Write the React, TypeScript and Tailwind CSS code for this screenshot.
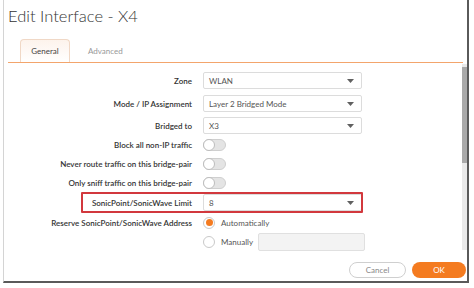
import React from 'react';

const font = { fontFamily: 'Lato, "Open Sans", "Liberation Sans", sans-serif' };

const Caret = () => (
  <svg width="7" height="4" viewBox="0 0 7 4" className="shrink-0">
    <path d="M0 0 L7 0 L3.5 4 Z" fill="#606060" />
  </svg>
);

const Select = ({ value }: { value: string }) => (
  <div className="w-[159px] h-[17px] border border-[#dcdcdc] rounded-[2px] bg-white flex items-center justify-between pl-[5px] pr-[7px] text-[8px] text-[#555]">
    <span>{value}</span>
    <Caret />
  </div>
);

const Toggle = () => (
  <div className="w-[23px] h-[12px] rounded-full bg-[#e4e4e4] border border-[#cfcfcf] relative">
    <span className="absolute left-[-1px] top-[-1px] w-[12px] h-[12px] rounded-full bg-white border border-[#bdbdbd]" />
  </div>
);

const Row = ({ label, h, children, className = '' }: { label: string; h: string; children?: React.ReactNode; className?: string }) => (
  <div className={`flex items-center ${h} ${className}`}>
    <div className="w-[188px] text-right text-[8px] font-semibold text-[#333] whitespace-nowrap">{label}</div>
    <div className="ml-[11px] flex items-center">{children}</div>
  </div>
);

export default function App() {
  return (
    <div className="w-[474px] h-[288px] bg-white overflow-hidden" style={font}>
      <div className="ml-[3px] w-[466px] h-[283px] bg-white border-l border-[#d4d4d4] border-r-2 border-b-2 border-r-[#5a5a5a] border-b-[#5a5a5a] relative">
        {/* Title */}
        <div className="pl-[4px] pt-[5px] h-[36px] text-[16.5px] font-light text-[#333] leading-[22px]">Edit Interface - X4</div>

        {/* Tabs */}
        <div className="mx-[4px] h-[27px] border-b border-[#f3a56c] flex items-end">
          <div className="ml-[12px] w-[50px] h-[23px] rounded-t-[4px] border border-b-0 border-[#f0d8c6] bg-gradient-to-b from-[#fdf3ec] to-white flex items-center justify-center text-[8px] text-[#444]">
            General
          </div>
          <div className="ml-[18px] h-[23px] flex items-center text-[8px] text-[#999]">Advanced</div>
        </div>

        {/* Scrollbar */}
        <div className="absolute left-[458px] top-[64px] w-[5px] h-[186px] bg-[#e9e9e9]">
          <div className="mt-[3px] h-[96px] bg-[#a9a9a9]" />
        </div>

        {/* Form */}
        <div className="pt-[9px] flex flex-col">
          <Row label="Zone" h="h-[17px]"><Select value="WLAN" /></Row>
          <Row label="Mode / IP Assignment" h="h-[17px]" className="mt-[6px]"><Select value="Layer 2 Bridged Mode" /></Row>
          <Row label="Bridged to" h="h-[17px]" className="mt-[5px]"><Select value="X3" /></Row>
          <Row label="Block all non-IP traffic" h="h-[19px]" className="mt-[1px]"><Toggle /></Row>
          <Row label="Never route traffic on this bridge-pair" h="h-[19px]"><Toggle /></Row>
          <Row label="Only sniff traffic on this bridge-pair" h="h-[19px]"><Toggle /></Row>
          <div className="relative">
            <Row label="SonicPoint/SonicWave Limit" h="h-[21px]"><Select value="8" /></Row>
            <span className="absolute left-[77px] top-0 w-[282px] h-[21px] border-2 border-[#d2383d] rounded-[1px]" />
          </div>
          <Row label="Reserve SonicPoint/SonicWave Address" h="h-[19px]">
            <span className="w-[12px] h-[12px] rounded-full border border-[#c9c9c9] bg-white flex items-center justify-center">
              <span className="w-[7px] h-[7px] rounded-full bg-[#f47b20]" />
            </span>
            <span className="ml-[6px] text-[8px] text-[#555]">Automatically</span>
          </Row>
          <Row label="" h="h-[19px]">
            <span className="w-[12px] h-[12px] rounded-full border border-[#c9c9c9] bg-white" />
            <span className="ml-[6px] text-[8px] text-[#555]">Manually</span>
            <span className="ml-[5px] w-[107px] h-[18px] border border-[#e0e0e0] bg-[#f3f3f3] rounded-[2px]" />
          </Row>

          {/* Buttons */}
          <div className="mt-[11px] flex justify-end gap-[6px] pr-[1px]">
            <button className="w-[57px] h-[16px] rounded-full border border-[#cfcfcf] bg-white text-[8px] text-[#888] leading-none">Cancel</button>
            <button className="w-[54px] h-[16px] rounded-full bg-[#f47b20] text-[8px] text-white leading-none">OK</button>
          </div>
        </div>
      </div>
    </div>
  );
}
